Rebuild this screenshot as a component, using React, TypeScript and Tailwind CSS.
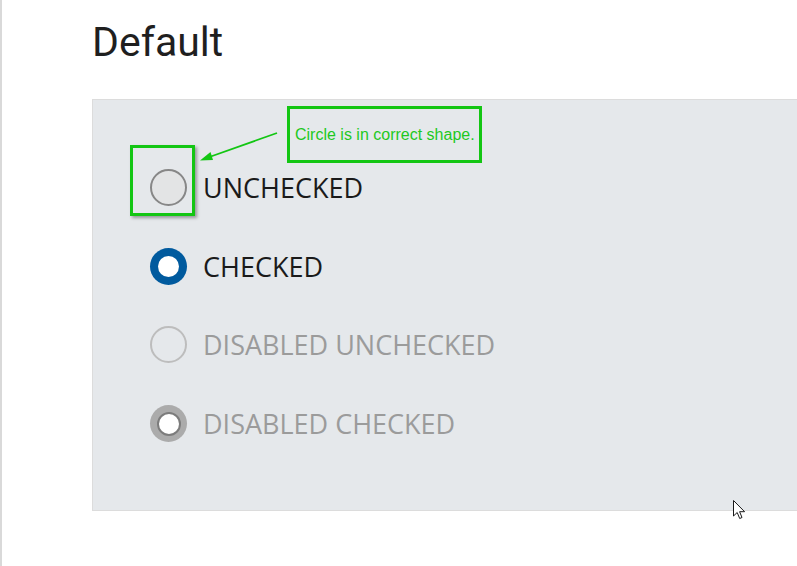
import React from "react";

type RadioState = "unchecked" | "checked" | "disabledUnchecked" | "disabledChecked";

const Radio = ({ state }: { state: RadioState }) => {
  if (state === "checked") {
    return (
      <span className="w-[37px] h-[37px] rounded-full bg-[#005a9e] flex items-center justify-center flex-shrink-0">
        <span className="w-[21px] h-[21px] rounded-full bg-white" />
      </span>
    );
  }
  if (state === "disabledChecked") {
    return (
      <span className="w-[37px] h-[37px] rounded-full bg-[#ababab] flex items-center justify-center flex-shrink-0">
        <span className="w-[24px] h-[24px] rounded-full bg-white border-2 border-[#7c7c7c]" />
      </span>
    );
  }
  if (state === "disabledUnchecked") {
    return <span className="w-[37px] h-[37px] rounded-full border-2 border-[#bdbdbd] flex-shrink-0" />;
  }
  return <span className="w-[37px] h-[37px] rounded-full border-2 border-[#878787] bg-[#e3e4e5] flex-shrink-0" />;
};

const rows: { label: string; state: RadioState }[] = [
  { label: "UNCHECKED", state: "unchecked" },
  { label: "CHECKED", state: "checked" },
  { label: "DISABLED UNCHECKED", state: "disabledUnchecked" },
  { label: "DISABLED CHECKED", state: "disabledChecked" },
];

const App = () => {
  return (
    <div className="relative w-full h-screen overflow-hidden bg-white border-l-2 border-[#d9d9d9]">
      <div className="pl-[90px] pt-[18px]">
        <h1
          className="text-[41px] leading-[48px] text-[#1f1f1f] font-normal"
          style={{ fontFamily: "Roboto, sans-serif" }}
        >
          Default
        </h1>

        {/* Radio group panel */}
        <div className="mt-[33px] w-[760px] h-[412px] bg-[#e5e8eb] border border-[#dcdcdc] pl-[57px] pt-[69px]">
          <div className="flex flex-col gap-[41.7px]">
            {rows.map((row) => {
              const disabled = row.state.startsWith("disabled");
              return (
                <div key={row.label} className="flex items-center gap-4 h-[37px]">
                  <Radio state={row.state} />
                  <span
                    className={`text-[27px] leading-none ${disabled ? "text-[#9b9b9b]" : "text-[#1a1a1a]"}`}
                    style={{ fontFamily: '"Open Sans", sans-serif' }}
                  >
                    {row.label}
                  </span>
                </div>
              );
            })}
          </div>
        </div>
      </div>

      {/* Annotation: highlight box */}
      <div className="absolute left-[128px] top-[145px] w-[65px] h-[71px] border-[3px] border-[#13c613] shadow-[2px_2px_3px_rgba(0,0,0,0.35)]" />

      {/* Annotation: note */}
      <div
        className="absolute left-[285px] top-[106px] w-[195px] h-[57px] border-[3px] border-[#13c613] flex items-center pl-[5px] text-[16px] text-[#1ec81e]"
        style={{ fontFamily: '"Liberation Sans", Arial, sans-serif' }}
      >
        Circle is in correct shape.
      </div>

      {/* Annotation: arrow */}
      <svg className="absolute left-[-2px] top-0" width="797" height="566" viewBox="0 0 797 566">
        <line x1="277" y1="133" x2="208" y2="157.5" stroke="#13c613" strokeWidth="1.8" />
        <polygon points="200,160.5 210.5,152 213,160" fill="#13c613" />
      </svg>

      {/* Mouse cursor */}
      <svg className="absolute left-[731px] top-[500px]" width="13" height="20" viewBox="0 0 13 20">
        <path
          d="M0.5 0.5 L0.5 16 L4.2 12.5 L6.7 18.5 L9 17.5 L6.6 11.7 L11.6 11.7 Z"
          fill="white"
          stroke="#1a1a1a"
          strokeWidth="1"
          strokeLinejoin="round"
        />
      </svg>
    </div>
  );
};

export default App;
